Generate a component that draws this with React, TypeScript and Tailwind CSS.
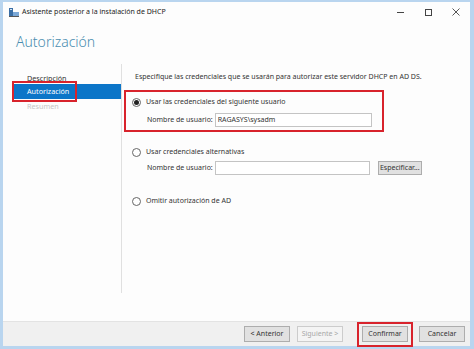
import React from "react";

const font = { fontFamily: '"Noto Sans", "Open Sans", sans-serif' };

const Radio = ({ checked }: { checked?: boolean }) => (
  <span className="w-[9px] h-[9px] rounded-full border border-[#666] bg-white flex items-center justify-center shrink-0">
    {checked && <span className="w-[5px] h-[5px] rounded-full bg-[#222]" />}
  </span>
);

const Btn = ({ label, disabled }: { label: string; disabled?: boolean }) => (
  <div
    className={
      "w-[46px] h-[16px] flex items-center justify-center border text-[7px] whitespace-nowrap " +
      (disabled
        ? "border-[#ccc] bg-[#f4f4f4] text-[#a8a8a8]"
        : "border-[#adadad] bg-[#e1e1e1] text-[#333]")
    }
  >
    {label}
  </div>
);

export default function App() {
  return (
    <div
      className="w-[474px] h-[349px] bg-[#b9d5ef] pl-[3px] pt-[2px] pr-[4px] pb-[3px] overflow-hidden"
      style={font}
    >
      <div className="w-full h-full bg-[#fdfdfd] flex flex-col">
        {/* title bar */}
        <div className="h-[20px] flex items-center pl-[6px] shrink-0">
          <svg width="10" height="9" viewBox="0 0 10 9" className="mr-[3px]">
            <rect x="0" y="0" width="4" height="8" fill="#3a6ea5" />
            <rect x="4" y="4" width="6" height="4" fill="#7aa7d6" />
            <rect x="1" y="1" width="2" height="1" fill="#cfe2f5" />
            <rect x="0" y="8" width="10" height="1" fill="#555" />
          </svg>
          <span className="text-[7px] text-[#222]">Asistente posterior a la instalación de DHCP</span>
          <div className="ml-auto flex items-center h-full">
            <div className="w-[28px] flex justify-center">
              <div className="w-[7px] h-px bg-[#444]" />
            </div>
            <div className="w-[28px] flex justify-center">
              <div className="w-[7px] h-[7px] border border-[#444]" />
            </div>
            <div className="w-[28px] flex justify-center">
              <svg width="8" height="8" viewBox="0 0 8 8">
                <path d="M0.5 0.5 L7.5 7.5 M7.5 0.5 L0.5 7.5" stroke="#444" strokeWidth="0.9" />
              </svg>
            </div>
          </div>
        </div>

        {/* heading */}
        <div className="h-[42px] pl-[13px] pt-[13px] shrink-0">
          <div className="text-[14px] font-light text-[#4a8db0] leading-none">Autorización</div>
        </div>

        {/* body */}
        <div className="flex flex-1 text-[#333]">
          <div className="w-[119px] border-r border-[#e0e0e0] mb-[28px] pt-[8px] flex flex-col">
            <div className="h-[12px] pl-[24px] text-[7.2px] flex items-center">Descripción</div>
            <div className="h-[15px] ml-[9px] bg-[#0b75c8] text-white text-[7.2px] flex items-center relative">
              <span className="pl-[15px]">Autorización</span>
              <div className="absolute left-[0px] -top-[3px] w-[65px] h-[21px] border-2 border-[#d8232c]" />
            </div>
            <div className="h-[14px] pl-[24px] text-[7.2px] text-[#c6c6c6] flex items-center">Resumen</div>
          </div>

          <div className="flex-1 pl-[2px] pt-[7px] text-[7px] whitespace-nowrap">
            <div className="pl-[11px] h-[12px] flex items-center">
              Especifique las credenciales que se usarán para autorizar este servidor DHCP en AD DS.
            </div>
            <div className="mt-[7px] w-[260px] h-[42px] border-2 border-[#d8232c] pl-[6px] pt-[5px]">
              <div className="flex items-center gap-[5px] h-[10px]">
                <Radio checked />
                <span>Usar las credenciales del siguiente usuario</span>
              </div>
              <div className="flex items-center mt-[6px] pl-[15px] h-[14px]">
                <span className="mr-[2px]">Nombre de usuario:</span>
                <div className="w-[157px] h-[14px] border border-[#c4c4c4] bg-white flex items-center pl-[2px]">
                  RAGASYS\sysadm
                </div>
              </div>
            </div>

            <div className="mt-[15px] pl-[8px] flex items-center gap-[5px] h-[10px]">
              <Radio />
              <span>Usar credenciales alternativas</span>
            </div>
            <div className="flex items-center mt-[4px] pl-[23px] h-[14px]">
              <span className="mr-[2px]">Nombre de usuario:</span>
              <div className="w-[155px] h-[14px] border border-[#c4c4c4] bg-white" />
              <div className="ml-[8px] w-[44px] h-[14px] border border-[#adadad] bg-[#e1e1e1] flex items-center justify-center">
                Especificar...
              </div>
            </div>

            <div className="mt-[21px] pl-[8px] flex items-center gap-[5px] h-[10px]">
              <Radio />
              <span>Omitir autorización de AD</span>
            </div>
          </div>
        </div>

        {/* footer */}
        <div className="h-[25px] border-t border-[#e3e3e3] bg-[#f0f0f0] flex items-center justify-end pr-[5px] shrink-0">
          <Btn label="< Anterior" />
          <div className="ml-[7px]">
            <Btn label="Siguiente >" disabled />
          </div>
          <div className="ml-[14px] w-[56px] h-[25px] border-2 border-[#d8232c] flex items-center justify-center">
            <Btn label="Confirmar" />
          </div>
          <div className="ml-[6px]">
            <Btn label="Cancelar" />
          </div>
        </div>
      </div>
    </div>
  );
}
